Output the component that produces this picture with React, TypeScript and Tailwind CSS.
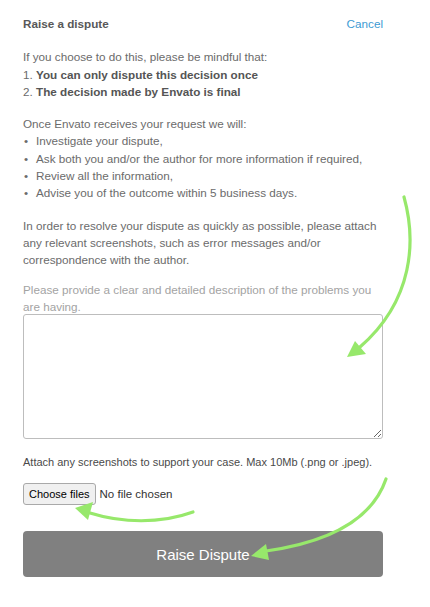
import React from "react";

const bullets = [
  "Investigate your dispute,",
  "Ask both you and/or the author for more information if required,",
  "Review all the information,",
  "Advise you of the outcome within 5 business days.",
];

// green hand-drawn annotation arrows laid over the form
function Arrows() {
  return (
    <svg
      className="pointer-events-none absolute left-0 top-0"
      width={430}
      height={607}
      viewBox="0 0 430 607"
      fill="none"
    >
      <g stroke="#97e86b" strokeWidth={3.2} strokeLinecap="round">
        <path d="M404 197 C 416 240, 414 300, 360 347" />
        <path d="M386 479 C 372 520, 330 542, 266 551" />
        <path d="M193 512 C 160 524, 122 523, 90 513" />
      </g>
      <g fill="#97e86b">
        <polygon points="347,357 355,341 366,354" />
        <polygon points="251,556 266,544 269,560" />
        <polygon points="75,508 93,502 88,520" />
      </g>
    </svg>
  );
}

export default function App() {
  return (
    <div className="relative h-[607px] w-[430px] overflow-hidden bg-white font-['Liberation_Sans',Arial,sans-serif] text-[11.7px] leading-[17.3px] text-[#6b6b6b]">
      <div className="pl-[23px] pr-[47px] pt-[15px]">
        {/* header */}
        <div className="flex items-center justify-between">
          <h2 className="font-bold text-[#585858]">Raise a dispute</h2>
          <button className="text-[#3c9ad3]">Cancel</button>
        </div>

        <p className="mt-[16px]">If you choose to do this, please be mindful that:</p>
        <ol>
          <li>
            1. <span className="font-bold text-[#555]">You can only dispute this decision once</span>
          </li>
          <li>
            2. <span className="font-bold text-[#555]">The decision made by Envato is final</span>
          </li>
        </ol>

        <p className="mt-[15px]">Once Envato receives your request we will:</p>
        <ul>
          {bullets.map((b) => (
            <li key={b} className="flex">
              <span className="w-[13px] pl-[1px]">•</span>
              <span>{b}</span>
            </li>
          ))}
        </ul>

        <p className="mt-[15px]">
          In order to resolve your dispute as quickly as possible, please attach any relevant
          screenshots, such as error messages and/or correspondence with the author.
        </p>

        <label className="mt-[12px] block text-[#a3a3a3]">
          Please provide a clear and detailed description of the problems you are having.
        </label>
        <textarea className="mt-[-1px] block h-[125px] w-full resize-y rounded-[3px] border border-[#bdbdbd] bg-white p-1 outline-none" />

        <p className="mt-[15px] text-[11px] text-[#4a4a4a]">
          Attach any screenshots to support your case. Max 10Mb (.png or .jpeg).
        </p>

        <div className="mt-[12px] flex items-center gap-[4px]">
          <button className="h-[22px] rounded-[3px] border border-[#a9a9a9] bg-[#f0f0f0] px-[5px] text-[11px] text-black">
            Choose files
          </button>
          <span className="text-[11.5px] text-[#333]">No file chosen</span>
        </div>

        <button className="mt-[26px] flex h-[46px] w-full items-center justify-center rounded-[4px] bg-[#808080] text-[15px] text-white">
          Raise Dispute
        </button>
      </div>
      <Arrows />
    </div>
  );
}
